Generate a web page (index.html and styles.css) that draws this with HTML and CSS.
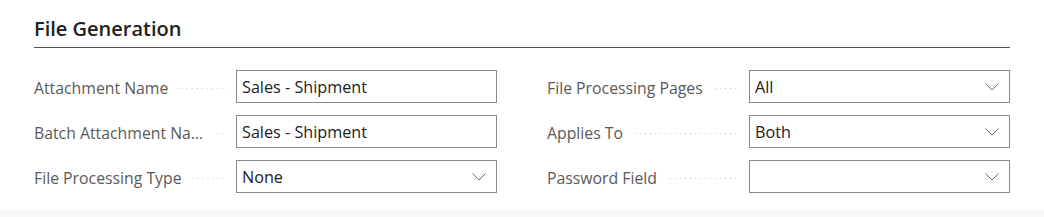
FILE: index.html
```html
<!DOCTYPE html>
<html lang="en">
<head>
    <meta charset="UTF-8">
    <title>File Generation</title>
    <link rel="stylesheet" href="styles.css">
</head>
<body>
    <div class="card">
        <h2 class="group-title">File Generation</h2>

        <div class="columns">
            <div class="column">
                <div class="field">
                    <label class="caption"><span class="caption-text">Attachment Name</span><span class="leader"></span></label>
                    <div class="control">
                        <input class="text-input" type="text" value="Sales - Shipment">
                    </div>
                </div>
                <div class="field">
                    <label class="caption"><span class="caption-text">Batch Attachment Name</span><span class="leader"></span></label>
                    <div class="control">
                        <input class="text-input" type="text" value="Sales - Shipment">
                    </div>
                </div>
                <div class="field">
                    <label class="caption"><span class="caption-text">File Processing Type</span><span class="leader"></span></label>
                    <div class="control select">
                        <span class="select-value">None</span>
                        <svg class="chevron" width="14" height="8" viewBox="0 0 14 8"><path d="M0.5 0.5 L7 7 L13.5 0.5" fill="none" stroke="#6b6b6b" stroke-width="1"/></svg>
                    </div>
                </div>
            </div>

            <div class="column">
                <div class="field">
                    <label class="caption"><span class="caption-text">File Processing Pages</span><span class="leader"></span></label>
                    <div class="control select">
                        <span class="select-value">All</span>
                        <svg class="chevron" width="14" height="8" viewBox="0 0 14 8"><path d="M0.5 0.5 L7 7 L13.5 0.5" fill="none" stroke="#6b6b6b" stroke-width="1"/></svg>
                    </div>
                </div>
                <div class="field">
                    <label class="caption"><span class="caption-text">Applies To</span><span class="leader"></span></label>
                    <div class="control select">
                        <span class="select-value">Both</span>
                        <svg class="chevron" width="14" height="8" viewBox="0 0 14 8"><path d="M0.5 0.5 L7 7 L13.5 0.5" fill="none" stroke="#6b6b6b" stroke-width="1"/></svg>
                    </div>
                </div>
                <div class="field">
                    <label class="caption"><span class="caption-text">Password Field</span><span class="leader"></span></label>
                    <div class="control select">
                        <span class="select-value"></span>
                        <svg class="chevron" width="14" height="8" viewBox="0 0 14 8"><path d="M0.5 0.5 L7 7 L13.5 0.5" fill="none" stroke="#6b6b6b" stroke-width="1"/></svg>
                    </div>
                </div>
            </div>
        </div>
    </div>
</body>
</html>
```

FILE: styles.css
```css
html, body {
    margin: 0;
    padding: 0;
}
body {
    font-family: 'Open Sans', 'Noto Sans', sans-serif;
    background-color: #f8f8f8;
    color: #212121;
}
.card {
    background-color: #ffffff;
    padding: 15px 34px 17px 34px;
    height: 177px;
}
.group-title {
    margin: 0;
    font-size: 20px;
    font-weight: 600;
    line-height: 28px;
    color: #212121;
    padding-bottom: 4px;
    border-bottom: 1px solid #505050;
}
.columns {
    display: grid;
    grid-template-columns: 1fr 1fr;
    column-gap: 50px;
    margin-top: 22px;
}
.column {
    display: flex;
    flex-direction: column;
    gap: 12px;
}
.field {
    display: flex;
    align-items: center;
    height: 33px;
}
.caption {
    display: flex;
    align-items: center;
    width: 202px;
    flex-shrink: 0;
    padding-right: 9px;
    box-sizing: border-box;
    font-size: 15.8px;
    color: #5a5a5a;
    padding-top: 2px;
}
.caption-text {
    white-space: nowrap;
    overflow: hidden;
    text-overflow: ellipsis;
    max-width: 172px;
}
.leader {
    flex: 1;
    min-width: 2px;
    height: 1px;
    margin-left: 9px;
    margin-top: 2px;
    background-image: linear-gradient(to right, #c8c8c8 1px, transparent 1px);
    background-size: 5px 1px;
    background-repeat: repeat-x;
    background-position: right center;
}
.control {
    flex: 1;
    height: 33px;
    box-sizing: border-box;
    border: 1px solid #8a8a8a;
    background-color: #ffffff;
    display: flex;
    align-items: center;
}
.text-input {
    width: 100%;
    height: 100%;
    box-sizing: border-box;
    border: none;
    outline: none;
    padding: 1px 5px 0 5px;
    font-family: inherit;
    font-size: 16.2px;
    color: #212121;
    background: transparent;
}
.select {
    padding: 1px 10px 0 5px;
    justify-content: space-between;
}
.select-value {
    font-size: 16.2px;
    color: #212121;
}
.chevron {
    display: block;
}
```
